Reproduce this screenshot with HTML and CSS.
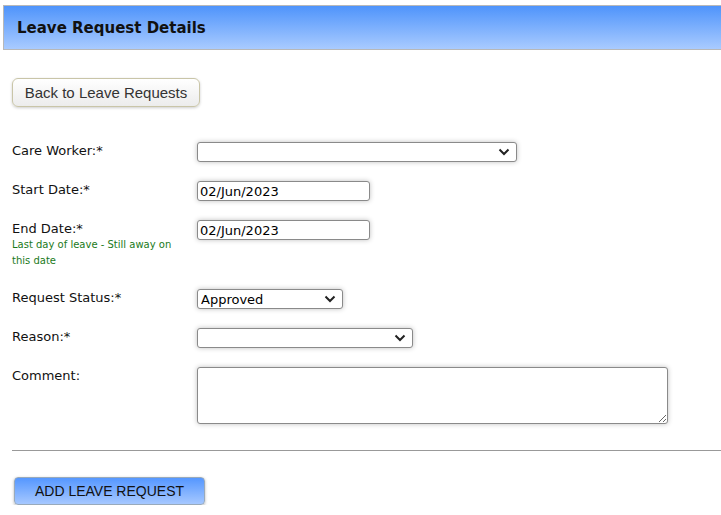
FILE: index.html
```html
<!DOCTYPE html>
<html>
<head>
<meta charset="utf-8">
<link rel="stylesheet" href="styles.css">
</head>
<body>
<div class="header">Leave Request Details</div>
<div class="content">
  <button class="back-btn" type="button">Back to Leave Requests</button>
  <form class="form">
    <div class="row">
      <label class="label">Care Worker:*</label>
      <select class="ctl sel-worker"><option></option></select>
    </div>
    <div class="row">
      <label class="label">Start Date:*</label>
      <input class="ctl date" type="text" value="02/Jun/2023">
    </div>
    <div class="row">
      <div class="label">End Date:*
        <div class="note">Last day of leave - Still away on this date</div>
      </div>
      <input class="ctl date" type="text" value="02/Jun/2023">
    </div>
    <div class="row">
      <label class="label">Request Status:*</label>
      <select class="ctl sel-status"><option>Approved</option></select>
    </div>
    <div class="row">
      <label class="label">Reason:*</label>
      <select class="ctl sel-reason"><option></option></select>
    </div>
    <div class="row">
      <label class="label">Comment:</label>
      <textarea class="ctl comment"></textarea>
    </div>
  </form>
  <hr class="divider">
  <button class="add-btn" type="button">ADD LEAVE REQUEST</button>
</div>
</body>
</html>
```
FILE: styles.css
```css
html, body {
  margin: 0;
  padding: 0;
  background: #fff;
}
body {
  font-family: "DejaVu Sans", Verdana, sans-serif;
  color: #111;
}
.header {
  margin: 5px 0 0 3px;
  height: 43px;
  border: 1px solid #b8b8b8;
  border-right: none;
  background: linear-gradient(to bottom, #4f94fb 0%, #a9cbff 100%);
  font-weight: bold;
  font-size: 15px;
  line-height: 44px;
  padding-left: 13px;
  color: #111;
}
.content {
  padding: 28px 0 0 12px;
}
.back-btn {
  display: block;
  font-family: "Liberation Sans", Arial, sans-serif;
  font-size: 15px;
  color: #333;
  height: 29px;
  width: 188px;
  padding: 0;
  border: 1px solid #c9c5a8;
  border-radius: 6px;
  background: linear-gradient(to bottom, #ffffff 0%, #ececec 100%);
  box-shadow: 0 1px 3px rgba(0,0,0,0.2);
}
.form {
  margin-top: 35px;
  display: flex;
  flex-direction: column;
  gap: 19px;
}
.row {
  display: flex;
  align-items: flex-start;
}
.label {
  width: 185px;
  flex: none;
  font-size: 13px;
  line-height: 17px;
  color: #111;
}
.note {
  font-size: 10px;
  line-height: 16px;
  padding-bottom: 1px;
  color: #1a7a1a;
  width: 170px;
}
.ctl {
  box-sizing: border-box;
  border: 1px solid #8a8a8a;
  border-radius: 3px;
  background-color: #fff;
  box-shadow: 0 0 5px rgba(0,0,0,0.25);
  font-family: "DejaVu Sans", Verdana, sans-serif;
  font-size: 13px;
  color: #000;
  margin: 0;
}
select.ctl {
  -webkit-appearance: none;
  appearance: none;
  height: 20px;
  padding: 0 24px 0 3px;
  background-image: url("data:image/svg+xml;utf8,<svg xmlns='http://www.w3.org/2000/svg' width='12' height='8' viewBox='0 0 12 8'><path d='M1.5 1.5 L6 6 L10.5 1.5' fill='none' stroke='%23222' stroke-width='2'/></svg>");
  background-repeat: no-repeat;
  background-position: right 6px center;
}
.sel-worker { width: 320px; }
.sel-status { width: 146px; }
.sel-reason { width: 216px; }
.date {
  width: 173px;
  height: 20px;
  padding: 0 2px;
}
.comment {
  width: 471px;
  height: 57px;
  resize: both;
}
.divider {
  margin: 26px 0 0 0;
  border: none;
  border-top: 1px solid #999;
  height: 0;
}
.add-btn {
  display: block;
  margin: 26px 0 0 2px;
  width: 191px;
  height: 28px;
  padding: 0;
  font-family: "Liberation Sans", Arial, sans-serif;
  font-size: 14px;
  color: #111;
  border: 1px solid #9ab;
  border-radius: 4px;
  background: linear-gradient(to bottom, #5597ff 0%, #a6c8ff 100%);
  box-shadow: 0 1px 3px rgba(0,0,0,0.3);
}
```
